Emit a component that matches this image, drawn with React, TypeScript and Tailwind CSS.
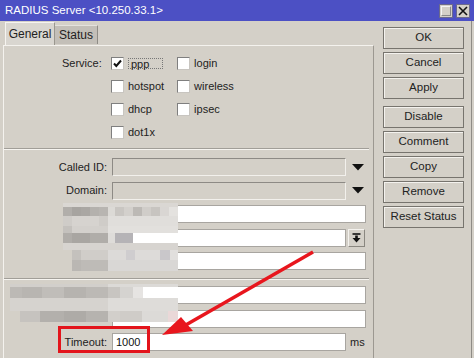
import React from 'react';

// ─── Data ───────────────────────────────────────────────────────────────────

const buttons: { label: string; gap?: boolean }[] = [
  { label: 'OK' },
  { label: 'Cancel' },
  { label: 'Apply' },
  { label: 'Disable', gap: true },
  { label: 'Comment' },
  { label: 'Copy' },
  { label: 'Remove' },
  { label: 'Reset Status' },
];

// pixelated redaction blocks: x, y, w, h, colour
const mosaic: [number, number, number, number, string][] = [
  [63, 203, 115, 4, '#dad7d3'],
  [63, 207, 9, 9, '#b1aeaa'], [72, 207, 9, 9, '#a7a4a0'], [81, 207, 9, 9, '#aaa7a3'],
  [90, 207, 9, 9, '#b4b1ad'], [99, 207, 9, 9, '#b8b5b1'], [108, 207, 7, 9, '#dcdad6'],
  [115, 207, 9, 9, '#c9c6c2'], [124, 207, 9, 9, '#d3d0cc'], [133, 207, 9, 9, '#bcb9b5'],
  [142, 207, 9, 9, '#d0cdc9'], [151, 207, 9, 9, '#c7c4c0'], [160, 207, 9, 9, '#d9d6d3'],
  [169, 207, 9, 9, '#e4e2df'],
  [63, 216, 9, 10, '#cfccc8'], [72, 216, 27, 10, '#d6d3cf'], [99, 216, 9, 10, '#cfccc8'],
  [108, 216, 70, 10, '#e0dedb'],
  [63, 226, 9, 7, '#c4c1bd'], [72, 226, 36, 7, '#d3d0cc'], [108, 226, 70, 7, '#e2e0dd'],
  [63, 233, 9, 10, '#b0ada9'], [72, 233, 18, 10, '#a9a6a2'], [90, 233, 18, 10, '#b0ada9'],
  [108, 233, 7, 10, '#dedcd9'], [115, 233, 18, 10, '#b5b3b6'],
  [63, 243, 115, 7, '#d7d4d0'],
  [72, 250, 9, 10, '#c4c1bd'], [81, 250, 27, 10, '#d0cdc9'], [108, 250, 18, 10, '#dcdad8'],
  [126, 250, 9, 10, '#cfcdcf'], [135, 250, 25, 10, '#dddbd9'], [160, 250, 10, 10, '#c9c7ca'],
  [170, 250, 8, 10, '#e1dfdd'],
  [72, 260, 9, 11, '#bab7b3'], [81, 260, 27, 11, '#bebbb7'], [108, 260, 70, 11, '#d9d7d5'],
  [10, 284, 98, 3, '#d2cfcb'], [108, 284, 70, 3, '#dcdad7'],
  [10, 287, 12, 11, '#bcb9b5'], [22, 287, 20, 11, '#b8b5b1'], [42, 287, 22, 11, '#c0bdb9'],
  [64, 287, 22, 11, '#b6b3af'], [86, 287, 22, 11, '#bcb9b5'], [108, 287, 12, 11, '#c8c5c1'],
  [120, 287, 13, 11, '#d5d3d0'], [133, 287, 10, 11, '#e6e4e2'],
  [10, 298, 98, 13, '#d6d3cf'], [108, 298, 70, 13, '#dedcd9'],
  [20, 311, 20, 11, '#c6c3bf'], [40, 311, 24, 11, '#b3b0ac'], [64, 311, 22, 11, '#aeaba7'],
  [86, 311, 22, 11, '#b6b3af'], [108, 311, 12, 11, '#d2cfcb'], [120, 311, 22, 11, '#cfccc8'],
  [142, 311, 26, 11, '#dcdad7'], [168, 311, 10, 11, '#ead8d8'],
];

// ─── Helpers ────────────────────────────────────────────────────────────────

const Checkbox: React.FC<{ checked?: boolean }> = ({ checked }) => (
  <span className="w-[13px] h-[13px] bg-white border border-t-[#7f7f7f] border-l-[#7f7f7f] border-r-[#c8c5c0] border-b-[#c8c5c0] flex items-center justify-center shrink-0">
    {checked && (
      <svg width="11" height="11" viewBox="0 0 11 11">
        <path d="M2 5.5 L4.3 8 L9 2.5" stroke="#111" strokeWidth="2" fill="none" />
      </svg>
    )}
  </span>
);

const Check: React.FC<{ label: string; checked?: boolean; focus?: boolean }> = ({ label, checked, focus }) => (
  <div className="flex items-center gap-[4px] h-[23px]">
    <Checkbox checked={checked} />
    <span className={focus ? 'px-[2px] w-[35px] h-[11px] leading-[10px] border border-dotted border-[#777]' : ''}>{label}</span>
  </div>
);

const Row: React.FC<{ label?: string; children: React.ReactNode }> = ({ label, children }) => (
  <div className="flex items-center h-[18px]">
    <div className="w-[104px] text-right pr-[1px] shrink-0">{label}</div>
    <div className="flex items-center ml-[4px] flex-1">{children}</div>
  </div>
);

const GreyInput = () => (
  <div className="w-[234px] h-[18px] bg-[#d4d0c8] border border-t-[#8d8a85] border-l-[#8d8a85] border-r-[#f2f0ec] border-b-[#f2f0ec]" />
);

const WhiteInput: React.FC<{ w: string; text?: string }> = ({ w, text }) => (
  <div className={`${w} h-[18px] bg-white border border-[#a8a5a0] flex items-center pl-[3px] text-[#111]`}>{text}</div>
);

const DropArrow = () => (
  <svg width="12" height="7" viewBox="0 0 12 7" className="ml-[6px]">
    <path d="M0 0 H12 L6 6.5 Z" fill="#111" />
  </svg>
);

// ─── Main ───────────────────────────────────────────────────────────────────

export default function App() {
  return (
    <div className="relative w-[474px] h-[358px] overflow-hidden bg-[#d4d0c8] text-[11px] text-[#222] font-['Liberation_Sans',Arial,sans-serif]">
      {/* title bar */}
      <div className="h-[21px] bg-[#4c50c4] flex items-center pl-[5px] pr-[4px] text-white text-[11.5px]">
        <span className="flex-1">RADIUS Server &lt;10.250.33.1&gt;</span>
        <div className="w-[14px] h-[14px] bg-[#d4d0c8] border border-[#6b6a8c] flex items-center justify-center">
          <div className="w-[10px] h-[10px] border border-[#f4f4f4] border-b-[#8a8a8a] border-r-[#8a8a8a]" />
        </div>
        <div className="w-[14px] h-[14px] ml-[3px] bg-[#d4d0c8] border border-[#6b6a8c] flex items-center justify-center">
          <svg width="10" height="10" viewBox="0 0 10 10">
            <path d="M1 1 L9 9 M9 1 L1 9" stroke="#111" strokeWidth="1.6" />
          </svg>
        </div>
      </div>

      <div className="flex">
        {/* left side */}
        <div className="w-[374px] pl-[3px]">
          {/* tabs */}
          <div className="flex items-end h-[24px] pl-[2px]">
            <div className="w-[50px] h-[23px] bg-[#d9d6d0] border-t border-l border-r border-t-[#f6f4f0] border-l-[#f6f4f0] border-r-[#9a978f] flex items-center justify-center text-[12px]">General</div>
            <div className="w-[43px] h-[19px] mb-[1px] bg-[#c3bfb8] border-t border-r border-t-[#e4e2dd] border-r-[#8f8c86] flex items-center justify-center text-[12px]">Status</div>
          </div>

          {/* panel */}
          <div className="h-[320px] border-t border-l border-r border-t-[#f4f2ee] border-l-[#f4f2ee] border-r-[#9c9891]">
            <div className="flex pl-[107px] pt-[6px]">
              <div className="flex flex-col">
                <Check label="ppp" checked focus />
                <Check label="hotspot" />
                <Check label="dhcp" />
                <Check label="dot1x" />
              </div>
              <div className="flex flex-col ml-[13px]">
                <Check label="login" />
                <Check label="wireless" />
                <Check label="ipsec" />
              </div>
            </div>
            <div className="absolute left-[62px] top-[57px] h-[13px] flex items-center">Service:</div>

            <div className="mt-[4px] mr-[4px] h-[2px] border-t border-b border-t-[#a19e98] border-b-[#f6f4f0]" />

            <div className="flex flex-col gap-[5.5px] mt-[8px]">
              <Row label="Called ID:"><GreyInput /><DropArrow /></Row>
              <Row label="Domain:"><GreyInput /><DropArrow /></Row>
              <Row><WhiteInput w="w-[254px]" /></Row>
              <Row>
                <WhiteInput w="w-[234px]" />
                <div className="ml-[2px] w-[17px] h-[18px] bg-[#d4d0c8] border border-t-[#f4f2ee] border-l-[#f4f2ee] border-r-[#8a8780] border-b-[#8a8780] flex items-center justify-center">
                  <svg width="9" height="10" viewBox="0 0 9 10">
                    <path d="M0.5 1 H8.5" stroke="#111" strokeWidth="1.6" />
                    <path d="M3.2 2.5 H5.8 V5 H8.5 L4.5 9.5 L0.5 5 H3.2 Z" fill="#111" />
                  </svg>
                </div>
              </Row>
              <Row><WhiteInput w="w-[254px]" text="ee" /></Row>
            </div>

            <div className="mt-[8px] mr-[4px] h-[2px] border-t border-b border-t-[#a19e98] border-b-[#f6f4f0]" />

            <div className="flex flex-col gap-[5.5px] mt-[6px]">
              <Row><WhiteInput w="w-[254px]" /></Row>
              <Row><WhiteInput w="w-[254px]" /></Row>
              <Row label="Timeout:">
                <WhiteInput w="w-[234px]" text="1000" />
                <span className="ml-[4px]">ms</span>
              </Row>
            </div>
          </div>
        </div>

        {/* buttons */}
        <div className="flex flex-col gap-[3px] ml-[9px] pt-[6px]">
          {buttons.map(b => (
            <div
              key={b.label}
              className={`w-[81px] h-[22px] bg-[#d4d0c8] border border-[#77746e] shadow-[inset_1px_1px_0_#f4f2ee] flex items-center justify-center text-[11.5px] text-[#222] ${b.gap ? 'mt-[4px]' : ''}`}
            >
              {b.label}
            </div>
          ))}
        </div>
      </div>

      {/* window right edge */}
      <div className="absolute right-[2px] top-[21px] bottom-0 w-[1px] bg-[#8f8c86]" />

      {/* redaction mosaic */}
      {mosaic.map(([x, y, w, h, c], i) => (
        <div key={i} className="absolute" style={{ left: x, top: y, width: w, height: h, background: c }} />
      ))}

      {/* annotation */}
      <div className="absolute left-[58px] top-[326px] w-[92px] h-[27px] border-[3px] border-[#e3141b]" />
      <svg className="absolute left-0 top-0 pointer-events-none" width="474" height="358">
        <line x1="313" y1="252" x2="184" y2="326" stroke="#e8161d" strokeWidth="3.5" />
        <polygon points="162,335 181,317 193,331" fill="#e8161d" />
      </svg>
    </div>
  );
}
